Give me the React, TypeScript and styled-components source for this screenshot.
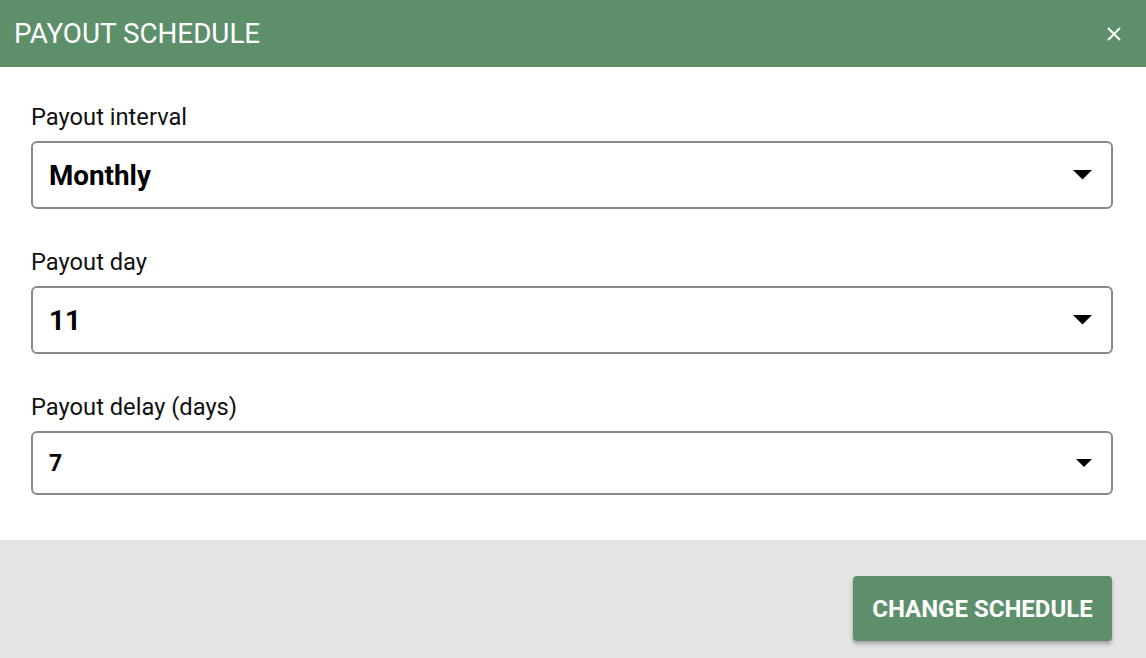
import styled, { createGlobalStyle } from "styled-components";

const GlobalStyle = createGlobalStyle`
  html, body {
    margin: 0;
    padding: 0;
    background: #ffffff;
    font-family: Roboto, "Liberation Sans", Arial, sans-serif;
  }
`;

const Dialog = styled.div`
  width: 1146px;
  height: 658px;
  display: flex;
  flex-direction: column;
  background: #ffffff;
  overflow: hidden;
`;

const Header = styled.div`
  height: 67px;
  flex-shrink: 0;
  background: #5e8f6b;
  display: flex;
  align-items: center;
  justify-content: space-between;
  padding: 0 20px 0 14px;
`;

const Title = styled.h1`
  margin: 0;
  color: #ffffff;
  font-size: 27.8px;
  font-weight: 400;
`;

const CloseButton = styled.button`
  border: none;
  background: none;
  padding: 0;
  width: 24px;
  height: 24px;
  display: flex;
  align-items: center;
  justify-content: center;
  cursor: pointer;
`;

const Body = styled.div`
  flex: 1;
  padding: 36px 33px 0 31px;
  display: flex;
  flex-direction: column;
  gap: 39px;
`;

const Field = styled.div`
  display: flex;
  flex-direction: column;
  gap: 10px;
`;

const Label = styled.label`
  font-size: 23.7px;
  line-height: 28px;
  color: #111111;
`;

const SelectBox = styled.div<{ $compact?: boolean }>`
  height: ${(p) => (p.$compact ? 64 : 68)}px;
  box-sizing: border-box;
  border: 2px solid #8a8a8a;
  border-radius: 6px;
  display: flex;
  align-items: center;
  justify-content: space-between;
  padding: 0 19px 0 16px;
`;

const Value = styled.span<{ $compact?: boolean }>`
  font-size: ${(p) => (p.$compact ? 23 : 27.8)}px;
  font-weight: 700;
  color: #000000;
`;

const Footer = styled.div`
  height: 118px;
  flex-shrink: 0;
  background: #e5e5e5;
  display: flex;
  justify-content: flex-end;
  align-items: flex-start;
  padding: 36px 34px 0 0;
  box-sizing: border-box;
`;

const PrimaryButton = styled.button`
  width: 259px;
  height: 65px;
  border: none;
  border-radius: 4px;
  background: #5e8f6b;
  color: #ffffff;
  font-family: Roboto, "Liberation Sans", Arial, sans-serif;
  font-size: 24px;
  font-weight: 700;
  box-shadow: 0 3px 4px rgba(0, 0, 0, 0.3);
  cursor: pointer;
`;

function Caret({ size }: { size: number }) {
  return (
    <svg width={size} height={size / 2} viewBox="0 0 20 10">
      <path d="M0 0 L20 0 L10 10 Z" fill="#000" />
    </svg>
  );
}

const fields = [
  { label: "Payout interval", value: "Monthly", compact: false },
  { label: "Payout day", value: "11", compact: false },
  { label: "Payout delay (days)", value: "7", compact: true },
];

export default function App() {
  return (
    <>
      <GlobalStyle />
      <Dialog>
        <Header>
          <Title>PAYOUT SCHEDULE</Title>
          <CloseButton aria-label="Close">
            <svg width="16" height="16" viewBox="0 0 16 16">
              <path
                d="M2 2 L14 14 M14 2 L2 14"
                stroke="#fff"
                strokeWidth="2"
                fill="none"
              />
            </svg>
          </CloseButton>
        </Header>
        <Body>
          {fields.map((f) => (
            <Field key={f.label}>
              <Label>{f.label}</Label>
              <SelectBox $compact={f.compact}>
                <Value $compact={f.compact}>{f.value}</Value>
                <Caret size={f.compact ? 16 : 19} />
              </SelectBox>
            </Field>
          ))}
        </Body>
        <Footer>
          <PrimaryButton>CHANGE SCHEDULE</PrimaryButton>
        </Footer>
      </Dialog>
    </>
  );
}
